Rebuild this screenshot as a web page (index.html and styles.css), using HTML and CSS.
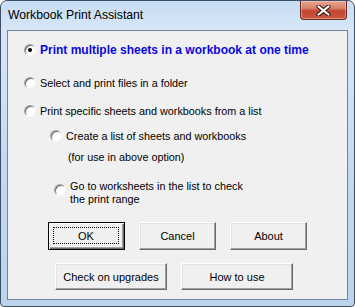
FILE: index.html
```html
<!DOCTYPE html>
<html lang="en">
<head>
    <meta charset="UTF-8">
    <title>Workbook Print Assistant</title>
    <link rel="stylesheet" href="styles.css">
</head>
<body>
    <div class="window">
        <div class="titlebar">
            <span class="title">Workbook Print Assistant</span>
            <div class="close">
                <svg width="15" height="11" viewBox="0 0 15 11">
                    <path d="M2.5 1.5 L12.5 9.5 M12.5 1.5 L2.5 9.5" stroke="#3b1712" stroke-width="4.2" stroke-linecap="round"/>
                    <path d="M2.5 1.5 L12.5 9.5 M12.5 1.5 L2.5 9.5" stroke="#ffffff" stroke-width="2.2" stroke-linecap="round"/>
                </svg>
            </div>
        </div>
        <div class="client">
            <div class="opt opt-main">
                <span class="radio checked"></span>
                <span class="label">Print multiple sheets in a workbook at one time</span>
            </div>
            <div class="opt opt-folder">
                <span class="radio"></span>
                <span class="label">Select and print files in a folder</span>
            </div>
            <div class="opt opt-list">
                <span class="radio"></span>
                <span class="label">Print specific sheets and workbooks from a list</span>
            </div>
            <div class="opt opt-create">
                <span class="radio"></span>
                <span class="label">Create a list of sheets and workbooks</span>
            </div>
            <div class="note">(for use in above option)</div>
            <div class="opt opt-goto">
                <span class="radio"></span>
                <span class="label">Go to worksheets in the list to check<br>the print range</span>
            </div>

            <div class="buttons row-main">
                <button class="btn default"><span class="focus">OK</span></button>
                <button class="btn">Cancel</button>
                <button class="btn">About</button>
            </div>
            <div class="buttons row-extra">
                <button class="btn wide">Check on upgrades</button>
                <button class="btn wide">How to use</button>
            </div>
        </div>
    </div>
</body>
</html>
```

FILE: styles.css
```css
* {
    box-sizing: border-box;
}
body {
    margin: 0;
    background: #fff;
    font-family: "Liberation Sans", Arial, sans-serif;
    color: #000;
}
.window {
    width: 355px;
    height: 307px;
    border: 1px solid #3e5068;
    border-radius: 7px 7px 4px 4px;
    background: linear-gradient(to bottom, #c8dcf3 0, #d6e6f7 28px, #c2d8f0 60%, #bcd4ee 100%);
    padding: 0 6px 6px;
    display: flex;
    flex-direction: column;
    overflow: hidden;
}
.titlebar {
    height: 29px;
    display: flex;
    justify-content: space-between;
    align-items: flex-start;
    padding-left: 1px;
}
.title {
    font-family: "Liberation Sans", Arial, sans-serif;
    font-size: 12.2px;
    line-height: 28px;
    color: #000;
}
.close {
    width: 47px;
    height: 19px;
    margin-right: 1px;
    border: 1px solid #6b2a20;
    border-top: none;
    border-radius: 0 0 4px 4px;
    background: linear-gradient(to bottom, #e7a792 0, #d9806b 40%, #c2452f 55%, #cc5a40 100%);
    box-shadow: inset 0 0 0 1px rgba(255, 210, 200, 0.45);
    display: flex;
    align-items: center;
    justify-content: center;
}
.client {
    flex: 1;
    border: 1px solid #71859a;
    background: #f0f0f0;
    padding-top: 11px;
    font-size: 10.8px;
}

/* option buttons */
.opt {
    display: flex;
    align-items: center;
    gap: 4px;
    height: 16px;
}
.radio {
    flex: none;
    width: 12px;
    height: 12px;
    border-radius: 50%;
    border: 1px solid;
    border-color: #a3a3a3 #f6f6f6 #f6f6f6 #a3a3a3;
    background: #fff;
    box-shadow: inset 1px 1px 0 #6a6a6a;
    display: flex;
    align-items: center;
    justify-content: center;
}
.radio.checked::after {
    content: "";
    width: 4px;
    height: 4px;
    border-radius: 50%;
    background: #000;
}
.opt-main {
    padding-left: 16px;
}
.opt-main .label {
    font-weight: bold;
    font-size: 12px;
    color: #0808e0;
}
.opt-folder {
    padding-left: 16px;
    margin-top: 17px;
}
.opt-list {
    padding-left: 16px;
    margin-top: 12px;
}
.opt-create {
    padding-left: 42px;
    margin-top: 9px;
}
.note {
    padding-left: 60px;
    margin-top: 5px;
    line-height: 16px;
}
.opt-goto {
    padding-left: 46px;
    margin-top: 15px;
    height: auto;
    align-items: flex-start;
}
.opt-goto .radio {
    margin-top: 4px;
}
.opt-goto .label {
    line-height: 13px;
}

/* command buttons */
.buttons {
    display: flex;
    gap: 14px;
}
.row-main {
    padding-left: 40px;
    margin-top: 16px;
}
.row-extra {
    padding-left: 47px;
    margin-top: 13px;
}
.btn {
    width: 77px;
    height: 28px;
    padding: 0;
    font-family: "Liberation Sans", Arial, sans-serif;
    font-size: 11px;
    color: #000;
    background: #f0f0f0;
    border: 1px solid;
    border-color: #fff #696969 #696969 #fff;
    box-shadow: inset -1px -1px 0 #a0a0a0, inset 1px 1px 0 #e3e3e3;
}
.btn.wide {
    width: 112px;
    height: 27px;
}
.btn.default {
    border: 1px solid #000;
    box-shadow: inset 1px 1px 0 #fff, inset -1px -1px 0 #696969, inset -2px -2px 0 #a0a0a0;
    padding: 4px 5px 5px 4px;
}
.focus {
    display: flex;
    height: 100%;
    align-items: center;
    justify-content: center;
    border: 1px dotted #000;
}
```
